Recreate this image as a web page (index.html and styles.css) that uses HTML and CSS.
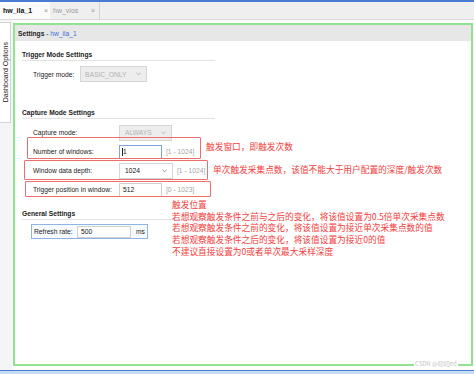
FILE: index.html
```html
<!DOCTYPE html>
<html>
<head>
<meta charset="utf-8">
<link rel="stylesheet" href="styles.css">
</head>
<body>
<div class="app">
  <div class="topline"></div>
  <div class="tabbar">
    <div class="tab active"><span class="tab-name">hw_ila_1</span><span class="tab-x">×</span></div>
    <div class="tab"><span class="tab-name">hw_vios</span><span class="tab-x">×</span></div>
  </div>
  <div class="main">
    <div class="sidebar">
      <div class="vtab"><span class="vtab-text">Dashboard Options</span></div>
    </div>
    <div class="panel">
      <div class="panel-head"><b>Settings</b> - <span class="link">hw_ila_1</span></div>
      <div class="content">
        <div class="section">
          <div class="sec-title">Trigger Mode Settings</div>
          <div class="row row-trig">
            <span class="label label-trig">Trigger mode:</span>
            <div class="select disabled w-trig"><span>BASIC_ONLY</span><svg class="chev" viewBox="0 0 6 4"><path d="M0.5 0.5 L3 3 L5.5 0.5" fill="none" stroke="currentColor" stroke-width="1"/></svg></div>
          </div>
        </div>
        <div class="section sec-capture">
          <div class="sec-title">Capture Mode Settings</div>
          <div class="row">
            <span class="label label-cap">Capture mode:</span>
            <div class="select disabled w-cap"><span>ALWAYS</span><svg class="chev" viewBox="0 0 6 4"><path d="M0.5 0.5 L3 3 L5.5 0.5" fill="none" stroke="currentColor" stroke-width="1"/></svg></div>
          </div>
          <div class="row">
            <span class="label label-cap">Number of windows:</span>
            <div class="input focus"><span class="caret"></span>1</div>
            <span class="range">[1 - 1024]</span>
          </div>
          <div class="row">
            <span class="label label-cap">Window data depth:</span>
            <div class="select w-depth"><span>1024</span><svg class="chev" viewBox="0 0 6 4"><path d="M0.5 0.5 L3 3 L5.5 0.5" fill="none" stroke="currentColor" stroke-width="1"/></svg></div>
            <span class="range">[1 - 1024]</span>
          </div>
          <div class="row">
            <span class="label label-cap">Trigger position in window:</span>
            <div class="input">512</div>
            <span class="range">[0 - 1023]</span>
          </div>
        </div>
        <div class="section sec-general">
          <div class="sec-title">General Settings</div>
          <div class="refresh">
            <span class="label">Refresh rate:</span>
            <div class="input input-refresh">500</div>
            <span class="unit">ms</span>
          </div>
        </div>
      </div>
    </div>
  </div>
  <div class="bottombar"></div>

  <div class="mark mark1"></div>
  <div class="mark mark2"></div>
  <div class="mark mark3"></div>
  <div class="note note1">触发窗口，即触发次数</div>
  <div class="note note2">单次触发采集点数，该值不能大于用户配置的深度/触发次数</div>
  <div class="note note3">触发位置<br>若想观察触发条件之前与之后的变化，将该值设置为0.5倍单次采集点数<br>若想观察触发条件之前的变化，将该值设置为接近单次采集点数的值<br>若想观察触发条件之后的变化，将该值设置为接近0的值<br>不建议直接设置为0或者单次最大采样深度</div>
  <div class="watermark">CSDN @叨叨ed</div>
</div>
</body>
</html>
```

FILE: styles.css
```css
* { box-sizing: border-box; }
html, body { margin: 0; padding: 0; }
body {
  width: 474px;
  height: 374px;
  overflow: hidden;
  background: #ffffff;
  font-family: "Liberation Sans", Arial, sans-serif;
  font-size: 6.7px;
  color: #222;
}
.app {
  position: relative;
  width: 474px;
  height: 374px;
  display: flex;
  flex-direction: column;
}
.topline { height: 2px; background: #4a7bd4; }
.tabbar {
  height: 18px;
  background: #efefef;
  border-bottom: 1px solid #dadada;
  display: flex;
}
.tab {
  width: 50px;
  display: flex;
  align-items: center;
  padding-left: 3px;
  border-right: 1px solid #d4d4d4;
  color: #9a9a9a;
  font-size: 7px;
}
.tab.active {
  background: #fbfbfb;
  color: #111;
  font-weight: bold;
  border-right: none;
}
.tab-name { width: 38px; }
.tab.active .tab-name { width: 41px; }
.tab-x { color: #9a9a9a; font-weight: normal; font-size: 7px; }
.main {
  height: 350px;
  display: flex;
}
.sidebar {
  width: 13px;
  background: #f5f5f5;
}
.vtab {
  margin-top: 2px;
  width: 11px;
  height: 101px;
  background: #ffffff;
  border: 1px solid #d2d2d2;
  border-left: none;
  display: flex;
  align-items: center;
  justify-content: center;
}
.vtab-text {
  writing-mode: vertical-rl;
  transform: rotate(180deg);
  font-size: 7px;
  color: #222;
  white-space: nowrap;
}
.panel {
  margin-top: 3px;
  margin-right: 1px;
  height: 343px;
  flex: 1;
  border: 2px solid #92e291;
  display: flex;
  flex-direction: column;
}
.panel-head {
  height: 16px;
  background: #e7e7e7;
  padding-left: 3px;
  display: flex;
  align-items: center;
  white-space: pre;
  color: #222;
}
.panel-head b { font-weight: bold; }
.link { color: #3d6fd6; }
.content { padding: 9px 0 0 7px; }
.section { width: 193px; }
.sec-title {
  line-height: 10px;
  font-weight: bold;
  border-bottom: 1px solid #e2e2e2;
}
.sec-capture { margin-top: 24px; }
.sec-general { margin-top: 10px; }
.row {
  height: 19px;
  display: flex;
  align-items: center;
  padding-left: 11px;
}
.sec-capture .sec-title + .row { margin-top: 4px; }
.row-trig { height: 20px; margin-top: 3px; }
.label { white-space: nowrap; }
.label-trig { width: 47px; }
.label-cap { width: 86px; }
.select {
  height: 16px;
  display: flex;
  align-items: center;
  justify-content: space-between;
  padding: 0 5px 0 5px;
  border: 1px solid #d6d6d6;
  background: #ffffff;
  color: #111;
}
.select.disabled {
  background: #ededed;
  color: #b2b2b2;
}
.w-trig { width: 67px; padding-left: 4px; }
.w-cap { width: 53px; }
.w-depth { width: 54px; color: #111; }
.chev { width: 5px; height: 4px; color: #777; }
.select.disabled .chev { color: #aaa; }
.input {
  width: 43px;
  height: 14px;
  border: 1px solid #d0d0d0;
  background: #fff;
  display: flex;
  align-items: center;
  padding-left: 3px;
  color: #111;
}
.input.focus { border-color: #7fa3e2; padding-left: 2px; }
.caret {
  display: inline-block;
  width: 1px;
  height: 8px;
  background: #222;
  margin-right: 0;
}
.range { margin-left: 4px; color: #a6a6a6; white-space: nowrap; }
.refresh {
  margin-top: 4px;
  margin-left: 9px;
  width: 117px;
  height: 15px;
  border: 1px solid #8fb5e6;
  background: #f7faff;
  display: flex;
  align-items: center;
  padding-left: 2px;
}
.refresh .label { width: 43px; }
.input-refresh { width: 54px; height: 12px; }
.unit { margin-left: 5px; }
.bottombar {
  height: 4px;
  border-top: 1px solid #4a7bd4;
  background: #c7dbf3;
}
.mark {
  position: absolute;
  border: 1.5px solid #ee6d6d;
  border-radius: 1px;
}
.mark1 { left: 27px; top: 137px; width: 174px; height: 22px; }
.mark2 { left: 24px; top: 160px; width: 184px; height: 20px; }
.mark3 { left: 25px; top: 181px; width: 186px; height: 16px; }
.note {
  position: absolute;
  font-family: "Noto Sans CJK SC", "Liberation Sans", sans-serif;
  font-size: 8.7px;
  line-height: 11.7px;
  color: #f24040;
  white-space: nowrap;
}
.note1 { left: 206px; top: 141px; }
.note2 { left: 213px; top: 164px; }
.note3 { left: 172px; top: 199px; }
.watermark {
  position: absolute;
  left: 414px;
  top: 360px;
  padding: 0 1px;
  background: #fff;
  font-family: "Noto Sans CJK SC", "Liberation Sans", sans-serif;
  font-size: 6px;
  line-height: 8px;
  color: #c4c4c4;
}
```
